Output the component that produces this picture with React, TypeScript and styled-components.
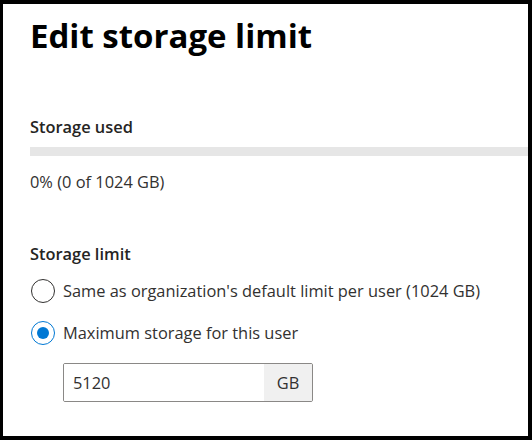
import React from "react";
import styled, { createGlobalStyle } from "styled-components";

const Global = createGlobalStyle`
  html, body { margin: 0; padding: 0; background: #000; }
  body { font-family: "Open Sans", "Noto Sans", "Liberation Sans", sans-serif; }
  * { box-sizing: border-box; }
`;

const Frame = styled.div`
  width: 532px;
  height: 440px;
  border-style: solid;
  border-color: #000;
  border-width: 4px 4px 4px 3px;
  background: #fff;
  overflow: hidden;
`;

const Content = styled.div`
  padding: 12px 0 0 27px;
  display: flex;
  flex-direction: column;
`;

const Title = styled.h1`
  margin: 0;
  font-size: 33px;
  line-height: 40px;
  font-weight: 700;
  color: #000;
`;

const Section = styled.section<{ $top: number }>`
  margin-top: ${(p) => p.$top}px;
  display: flex;
  flex-direction: column;
`;

const Label = styled.div`
  font-size: 16.4px;
  line-height: 22px;
  font-weight: 600;
  color: #252423;
`;

const Bar = styled.div`
  margin-top: 9px;
  height: 9px;
  background: #e6e6e6;
  margin-right: -10px;
`;

const Fill = styled.div`
  height: 100%;
  background: #0078d4;
`;

const Caption = styled.div`
  margin-top: 15px;
  font-size: 16.4px;
  line-height: 22px;
  color: #323130;
`;

const Options = styled.div`
  margin-top: 14px;
  display: flex;
  flex-direction: column;
  gap: 18px;
`;

const Option = styled.label`
  display: flex;
  align-items: center;
  gap: 8px;
  font-size: 16.4px;
  line-height: 24px;
  color: #323130;
  cursor: pointer;
`;

const RadioCircle = styled.span<{ $checked: boolean }>`
  width: 24px;
  height: 24px;
  margin-left: 1px;
  border-radius: 50%;
  border: 1px solid ${(p) => (p.$checked ? "#0078d4" : "#323130")};
  display: flex;
  align-items: center;
  justify-content: center;
  flex: none;
  &::after {
    content: "";
    width: 12px;
    height: 12px;
    border-radius: 50%;
    background: ${(p) => (p.$checked ? "#0078d4" : "transparent")};
  }
`;

const InputRow = styled.div`
  margin-top: 18px;
  margin-left: 33px;
  width: 250px;
  height: 39px;
  border: 1px solid #8a8886;
  border-radius: 2px;
  display: flex;
  overflow: hidden;
`;

const Input = styled.input`
  flex: 1;
  min-width: 0;
  border: none;
  outline: none;
  padding: 0 9px;
  font-family: inherit;
  font-size: 16.4px;
  color: #323130;
  background: #fff;
`;

const Suffix = styled.div`
  width: 48px;
  background: #f0f0f0;
  display: flex;
  align-items: center;
  justify-content: center;
  font-size: 16.4px;
  color: #323130;
`;

export default function App() {
  const used = 0;
  return (
    <>
      <Global />
      <Frame>
        <Content>
          <Title>Edit storage limit</Title>
          <Section $top={60}>
            <Label>Storage used</Label>
            <Bar>
              <Fill style={{ width: `${used}%` }} />
            </Bar>
            <Caption>0% (0 of 1024 GB)</Caption>
          </Section>
          <Section $top={50}>
            <Label>Storage limit</Label>
            <Options>
              <Option>
                <RadioCircle $checked={false} />
                Same as organization's default limit per user (1024 GB)
              </Option>
              <Option>
                <RadioCircle $checked={true} />
                Maximum storage for this user
              </Option>
            </Options>
            <InputRow>
              <Input defaultValue="5120" />
              <Suffix>GB</Suffix>
            </InputRow>
          </Section>
        </Content>
      </Frame>
    </>
  );
}
